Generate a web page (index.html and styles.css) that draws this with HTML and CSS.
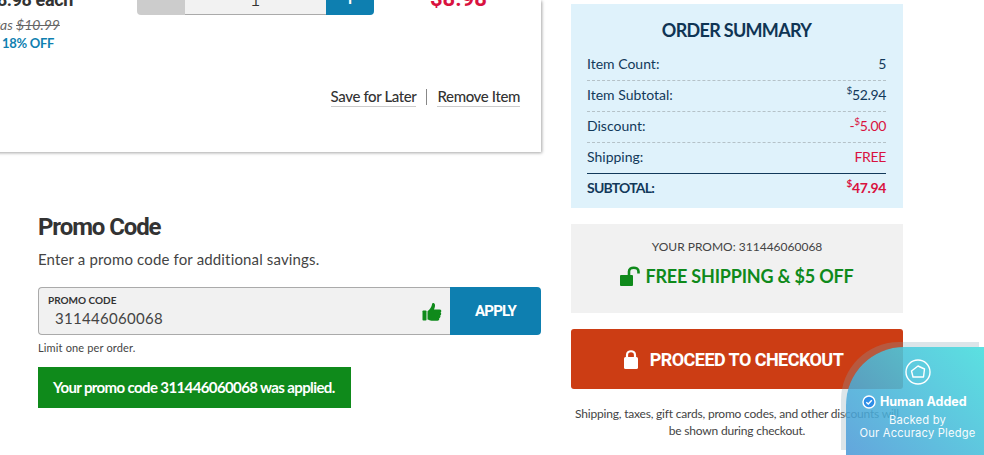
FILE: index.html
```html
<!DOCTYPE html>
<html lang="en">
<head>
    <meta charset="UTF-8">
    <meta name="viewport" content="width=device-width, initial-scale=1.0">
    <title>Cart</title>
    <link rel="stylesheet" href="styles.css">
</head>
<body>

    <div class="page">
        <div class="left-col">
            <div class="item-card">
                <div class="item-top">
                    <div class="item-pricing">
                        <div class="each-price">$8.98 each</div>
                        <div class="was-price">was <s>$10.99</s></div>
                        <div class="off-label">18% OFF</div>
                    </div>
                    <div class="stepper">
                        <span class="step-minus"></span>
                        <span class="step-value">1</span>
                        <span class="step-plus">+</span>
                    </div>
                    <div class="line-price">$8.98</div>
                </div>
                <div class="item-actions">
                    <a class="action-link">Save for Later</a>
                    <span class="action-sep"></span>
                    <a class="action-link">Remove Item</a>
                </div>
            </div>

            <div class="promo">
                <h2 class="promo-title">Promo Code</h2>
                <p class="promo-intro">Enter a promo code for additional savings.</p>
                <div class="promo-form">
                    <div class="promo-field">
                        <div class="promo-label">PROMO CODE</div>
                        <div class="promo-value">311446060068</div>
                        <svg class="thumb-icon" viewBox="0 0 20 20" width="20" height="20">
                            <rect x="0.5" y="8.5" width="4" height="10" rx="0.8" fill="#0f8a1b"/>
                            <path d="M5.5 9.2 C8 7.5 9.6 5 10.2 1.6 C10.4 0.6 12.8 0.8 13 3 C13.2 4.8 12.4 6.2 12 7.4 L17.6 7.4 C19.6 7.4 19.8 9.6 18.6 10.4 C19.6 11.2 19.4 12.8 18.2 13.4 C18.8 14.4 18.4 15.8 17.2 16.2 C17.6 17.4 16.8 18.8 15.4 18.8 L9.6 18.8 C8 18.8 7 18 5.5 17.6 Z" fill="#0f8a1b"/>
                        </svg>
                    </div>
                    <button class="apply-btn">APPLY</button>
                </div>
                <p class="promo-limit">Limit one per order.</p>
                <div class="promo-applied">Your promo code 311446060068 was applied.</div>
            </div>
        </div>

        <div class="right-col">
            <div class="summary">
                <h2 class="summary-title">ORDER SUMMARY</h2>
                <div class="summary-row"><span>Item Count:</span><span>5</span></div>
                <div class="summary-row"><span>Item Subtotal:</span><span><sup>$</sup>52.94</span></div>
                <div class="summary-row red-value"><span>Discount:</span><span>-<sup>$</sup>5.00</span></div>
                <div class="summary-row red-value no-line"><span>Shipping:</span><span>FREE</span></div>
                <div class="summary-row total-row red-value"><span>SUBTOTAL:</span><span><sup>$</sup>47.94</span></div>
            </div>

            <div class="your-promo">
                <div class="your-promo-code">YOUR PROMO: 311446060068</div>
                <div class="your-promo-deal">
                    <svg viewBox="0 0 20 20" width="20" height="20">
                        <rect x="0" y="9" width="13" height="11" rx="1" fill="#0f8a1b"/>
                        <path d="M9 9 V5.5 C9 0.5 18.5 0.5 18.5 5.5 V7.5" fill="none" stroke="#0f8a1b" stroke-width="2.6"/>
                    </svg>
                    <span>FREE SHIPPING &amp; $5 OFF</span>
                </div>
            </div>

            <button class="checkout-btn">
                <svg viewBox="0 0 14 19" width="14" height="19">
                    <rect x="0" y="7" width="14" height="12" rx="1.6" fill="#fff"/>
                    <path d="M3 8 V5 C3 0 11 0 11 5 V8" fill="none" stroke="#fff" stroke-width="2.2"/>
                </svg>
                <span>PROCEED TO CHECKOUT</span>
            </button>
            <p class="checkout-note">Shipping, taxes, gift cards, promo codes, and other discounts will be shown during checkout.</p>
        </div>
    </div>

    <div class="human-badge">
        <svg class="badge-house" viewBox="0 0 26 26" width="26" height="26">
            <circle cx="13" cy="13" r="12" fill="none" stroke="#fff" stroke-width="1.4"/>
            <path d="M6.5 12 L13 7 L19.5 10 L18.5 18 L8 18 Z" fill="none" stroke="#fff" stroke-width="1.4" stroke-linejoin="round"/>
        </svg>
        <div class="badge-head">
            <svg viewBox="0 0 14 14" width="14" height="14">
                <circle cx="7" cy="7" r="6" fill="#2f8fe8" stroke="#fff" stroke-width="1.4"/>
                <path d="M4.3 7.2 L6.3 9 L9.8 5.2" fill="none" stroke="#fff" stroke-width="1.4"/>
            </svg>
            <span>Human Added</span>
        </div>
        <div class="badge-text">Backed by<br>Our Accuracy Pledge</div>
    </div>

</body>
</html>
```

FILE: styles.css
```css
html, body {
    margin: 0;
    height: 455px;
    overflow: hidden;
}
body {
    font-family: Lato, "Noto Sans", sans-serif;
    color: #333;
    background-color: #fff;
    position: relative;
}
.page {
    display: grid;
    grid-template-columns: 541px 332px;
    gap: 30px;
    align-items: start;
}
.item-card {
    height: 152px;
    margin-left: -10px;
    background-color: #fff;
    box-shadow: 1px 1px 3px rgba(0, 0, 0, 0.35);
    display: flex;
    flex-direction: column;
    overflow: hidden;
}
.item-top {
    display: flex;
    height: 80px;
    margin-left: 10px;
    align-items: flex-start;
}
.item-pricing {
    width: 137px;
    flex: none;
    margin-top: -12px;
}
.each-price {
    font-family: Roboto, sans-serif;
    font-size: 18px;
    font-weight: 700;
    line-height: 24px;
    margin-left: -13px;
    white-space: nowrap;
    letter-spacing: -0.4px;
}
.was-price {
    font-size: 14px;
    font-style: italic;
    color: #666;
    margin-top: 4px;
    line-height: 18px;
    margin-left: -10px;
}
.off-label {
    font-size: 13px;
    font-weight: 700;
    color: #0f7fb0;
    line-height: 19px;
    margin-left: 2px;
    letter-spacing: -0.3px;
}
.stepper {
    display: flex;
    width: 237px;
    height: 15px;
    flex: none;
    overflow: hidden;
    border-radius: 0 0 4px 4px;
    align-items: flex-end;
}
.step-minus {
    width: 48px;
    height: 15px;
    background-color: #ccc;
}
.step-value {
    flex: 1;
    height: 14px;
    text-align: center;
    font-size: 14px;
    line-height: 4px;
    background-color: #f2f2f2;
    border-bottom: 1px solid #aaa;
    font-family: "Liberation Mono", monospace;
}
.step-plus {
    width: 48px;
    height: 27px;
    background-color: #0e7fb0;
    color: #fff;
    font-weight: 700;
    text-align: center;
    font-size: 20px;
    line-height: 20px;
}
.line-price {
    margin: -13px 0 0 56px;
    font-family: Roboto, sans-serif;
    font-size: 22px;
    font-weight: 700;
    line-height: 24px;
    color: #d9123f;
}
.item-actions {
    display: flex;
    justify-content: flex-end;
    align-items: center;
    gap: 10px;
    padding-right: 21px;
    margin-top: 6px;
}
.action-link {
    font-size: 15px;
    font-weight: 500;
    line-height: 20px;
    border-bottom: 1px solid #ccc;
    color: #333;
    letter-spacing: -0.38px;
}
.action-sep {
    width: 1px;
    height: 16px;
    background-color: #888;
}
.promo {
    padding: 60px 0 0 38px;
}
.promo-title {
    margin: 0;
    font-family: Roboto, sans-serif;
    font-size: 24px;
    font-weight: 700;
    line-height: 30px;
    letter-spacing: -1.1px;
}
.promo-intro {
    margin: 6px 0 0;
    font-size: 15px;
    line-height: 22px;
    letter-spacing: 0.15px;
    color: #444;
}
.promo-form {
    display: flex;
    margin-top: 17px;
    height: 48px;
}
.promo-field {
    flex: 1;
    position: relative;
    background-color: #f1f1f1;
    border: 1px solid #aaa;
    border-right: none;
    border-radius: 4px 0 0 4px;
    padding: 6px 0 0 9px;
}
.promo-label {
    font-size: 10px;
    font-weight: 700;
    line-height: 13px;
}
.promo-value {
    font-size: 15px;
    line-height: 20px;
    margin: 1px 0 0 7px;
    letter-spacing: 0.3px;
    color: #444;
}
.thumb-icon {
    position: absolute;
    right: 8px;
    top: 14px;
}
.apply-btn {
    width: 91px;
    border: none;
    border-radius: 0 4px 4px 0;
    background-color: #0e7fb0;
    color: #fff;
    font-family: Roboto, sans-serif;
    font-size: 15px;
    font-weight: 700;
    letter-spacing: -0.8px;
}
.promo-limit {
    margin: 5px 0 0;
    font-size: 11px;
    line-height: 16px;
    color: #444;
    letter-spacing: 0.15px;
}
.promo-applied {
    display: inline-block;
    margin-top: 11px;
    padding: 0 16px 0 15px;
    height: 41px;
    line-height: 41px;
    background-color: #0f8a1b;
    color: #fff;
    font-size: 15px;
    font-weight: 700;
    letter-spacing: -0.62px;
}
.right-col {
    padding-top: 4px;
}
.summary {
    background-color: #dff2fb;
    padding: 14px 17px 0 16px;
    height: 204px;
    box-sizing: border-box;
    color: #12395a;
}
.summary-title {
    margin: 0 0 8px;
    text-align: center;
    font-size: 18px;
    font-weight: 700;
    line-height: 24px;
    color: #0f3554;
    letter-spacing: -0.7px;
}
.summary-row {
    display: flex;
    justify-content: space-between;
    align-items: center;
    height: 26px;
    padding-bottom: 4px;
    border-bottom: 1px dashed #b5c2c8;
    font-size: 14px;
}
.summary-row span:last-child {
    letter-spacing: -0.35px;
}
.summary-row sup {
    font-size: 10px;
    line-height: 0;
}
.red-value span:last-child {
    color: #d9123f;
}
.no-line {
    border-bottom: 1px solid #12395a;
}
.total-row {
    border-bottom: none;
    font-weight: 700;
    letter-spacing: -0.8px;
}
.your-promo {
    margin-top: 16px;
    height: 89px;
    background-color: #f1f1f1;
    text-align: center;
    padding-top: 14px;
    box-sizing: border-box;
}
.your-promo-code {
    font-size: 12px;
    line-height: 18px;
    color: #444;
}
.your-promo-deal {
    display: flex;
    justify-content: center;
    align-items: center;
    gap: 5px;
    margin-top: 6px;
    font-size: 18px;
    font-weight: 700;
    line-height: 28px;
    color: #0f8a1b;
    letter-spacing: -0.2px;
}
.checkout-btn {
    display: flex;
    justify-content: center;
    align-items: center;
    gap: 12px;
    width: 100%;
    height: 60px;
    margin-top: 16px;
    padding: 0 7px 0 0;
    border: none;
    border-radius: 3px;
    background-color: #cc3d14;
    color: #fff;
    font-family: Roboto, sans-serif;
    font-size: 18px;
    font-weight: 700;
    letter-spacing: -0.55px;
}
.checkout-note {
    margin: 16px 0 0;
    text-align: center;
    font-size: 12px;
    line-height: 17px;
    color: #444;
    letter-spacing: -0.2px;
}
.human-badge {
    position: absolute;
    left: 846px;
    top: 347px;
    width: 138px;
    height: 108px;
    box-sizing: border-box;
    padding: 12px 0 0 5px;
    border-radius: 58px 0 0 0;
    background: linear-gradient(45deg, rgba(72, 150, 214, 0.85), rgba(77, 222, 222, 0.92));
    box-shadow: -5px -5px 0 rgba(130, 160, 175, 0.28);
    color: #fff;
    text-align: center;
    font-family: Inter, sans-serif;
}
.badge-house {
    display: block;
    margin: 0 auto 0 54px;
}
.badge-head {
    display: flex;
    align-items: center;
    gap: 4px;
    margin: 9px 0 0 11px;
    font-size: 12.5px;
    font-weight: 700;
    line-height: 16px;
}
.badge-text {
    margin-top: 4px;
    font-size: 11.2px;
    line-height: 12.5px;
    letter-spacing: 0.2px;
    opacity: 0.95;
}
```
